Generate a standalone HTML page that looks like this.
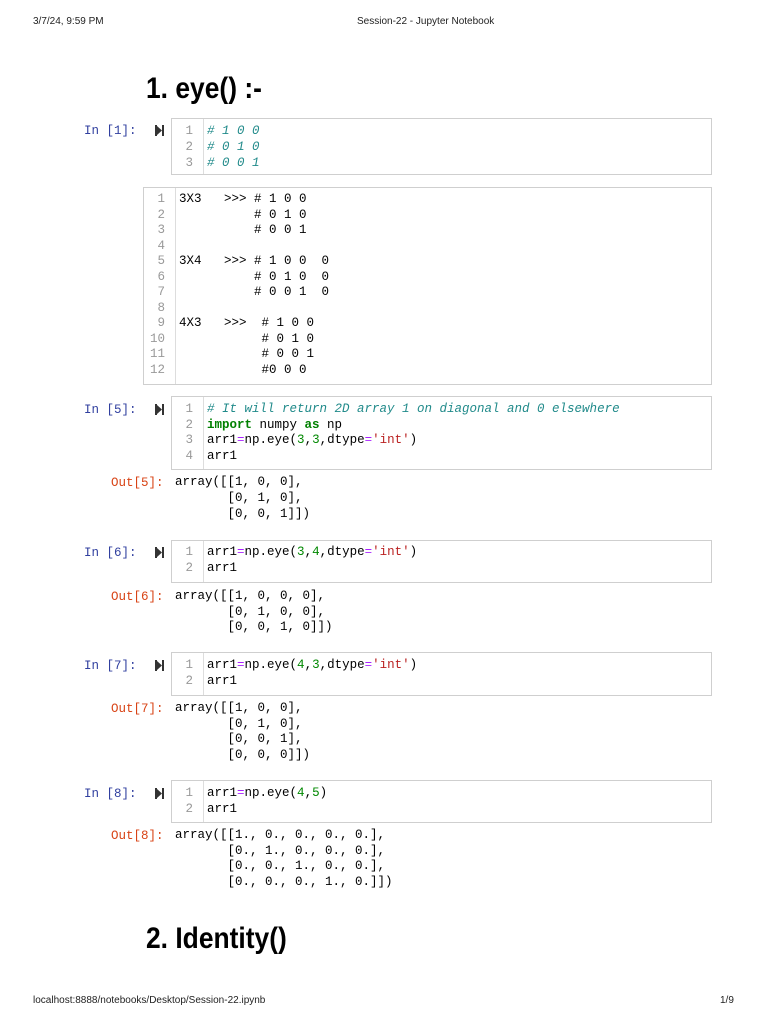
<!DOCTYPE html>
<html><head><meta charset="utf-8"><style>
body{margin:0;width:768px;height:1024px;background:#fff;position:relative;overflow:hidden;font-family:"Liberation Sans",sans-serif}
.a{position:absolute;white-space:pre}
.m{font-family:"Liberation Mono",monospace;font-size:12.5px;line-height:16px;color:#000}
.box{position:absolute;border:1px solid #cfcfcf;background:#fff;box-sizing:border-box}
.gut{position:absolute;top:0;bottom:0;border-right:1px solid #ddd}
.n{color:#999;text-align:right;width:20px}
.in{color:#303F9F}.out{color:#D84315}
.c{color:#208a8a;font-style:italic}
.k{color:#008000;font-weight:bold}.g{color:#080}.s{color:#BA2121}.o{color:#AA22FF}
.h{font-weight:bold;font-size:30px;line-height:30px;color:#000;transform:scaleX(0.88);transform-origin:0 0}
.run{position:absolute;width:9px;height:11px}
</style></head><body>
<div class="a" style="left:33px;top:16px;font-size:10px;color:#222">3/7/24, 9:59 PM</div>
<div class="a" style="left:357px;top:16px;font-size:10px;color:#222">Session-22 - Jupyter Notebook</div>
<div class="a h" style="left:146px;top:74px">1. eye() :-</div>

<!-- In 1 -->
<div class="a m in" style="left:84px;top:123px">In [1]:</div>
<svg class="run" style="left:155px;top:125px" viewBox="0 0 9 11"><path d="M0 0h2v11H0zM2 1l5 4.5L2 10z" fill="#333"/><rect x="7" y="0" width="2" height="11" fill="#333"/></svg>
<div class="box" style="left:171px;top:118px;width:541px;height:57px"><div class="gut" style="left:0;width:31px"></div></div>
<div class="a m n" style="left:173px;top:123px">1
2
3</div>
<div class="a m c" style="left:207px;top:123px"># 1 0 0
# 0 1 0
# 0 0 1</div>

<!-- raw -->
<div class="box" style="left:143px;top:187px;width:569px;height:198px"><div class="gut" style="left:0;width:31px"></div></div>
<div class="a m n" style="left:145px;top:192px;line-height:15.55px">1
2
3
4
5
6
7
8
9
10
11
12</div>
<div class="a m" style="left:179px;top:192px;line-height:15.55px">3X3   >>> # 1 0 0
          # 0 1 0
          # 0 0 1

3X4   >>> # 1 0 0  0
          # 0 1 0  0
          # 0 0 1  0

4X3   >>>  # 1 0 0
           # 0 1 0
           # 0 0 1
           #0 0 0</div>

<!-- In 5 -->
<div class="a m in" style="left:84px;top:402px">In [5]:</div>
<svg class="run" style="left:155px;top:404px" viewBox="0 0 9 11"><path d="M0 0h2v11H0zM2 1l5 4.5L2 10z" fill="#333"/><rect x="7" y="0" width="2" height="11" fill="#333"/></svg>
<div class="box" style="left:171px;top:396px;width:541px;height:74px"><div class="gut" style="left:0;width:31px"></div></div>
<div class="a m n" style="left:173px;top:402px;line-height:15.5px">1
2
3
4</div>
<div class="a m" style="left:207px;top:402px;line-height:15.5px"><span class="c"># It will return 2D array 1 on diagonal and 0 elsewhere</span>
<span class="k">import</span> numpy <span class="k">as</span> np
arr1<span class="o">=</span>np.eye(<span class="g">3</span>,<span class="g">3</span>,dtype<span class="o">=</span><span class="s">'int'</span>)
arr1</div>
<div class="a m out" style="left:111px;top:475px">Out[5]:</div>
<div class="a m" style="left:175px;top:475px;line-height:15.8px">array([[1, 0, 0],
       [0, 1, 0],
       [0, 0, 1]])</div>

<!-- In 6 -->
<div class="a m in" style="left:84px;top:545px">In [6]:</div>
<svg class="run" style="left:155px;top:547px" viewBox="0 0 9 11"><path d="M0 0h2v11H0zM2 1l5 4.5L2 10z" fill="#333"/><rect x="7" y="0" width="2" height="11" fill="#333"/></svg>
<div class="box" style="left:171px;top:540px;width:541px;height:43px"><div class="gut" style="left:0;width:31px"></div></div>
<div class="a m n" style="left:173px;top:545px;line-height:15.5px">1
2</div>
<div class="a m" style="left:207px;top:545px;line-height:15.5px">arr1<span class="o">=</span>np.eye(<span class="g">3</span>,<span class="g">4</span>,dtype<span class="o">=</span><span class="s">'int'</span>)
arr1</div>
<div class="a m out" style="left:111px;top:589px">Out[6]:</div>
<div class="a m" style="left:175px;top:589px;line-height:15.6px">array([[1, 0, 0, 0],
       [0, 1, 0, 0],
       [0, 0, 1, 0]])</div>

<!-- In 7 -->
<div class="a m in" style="left:84px;top:658px">In [7]:</div>
<svg class="run" style="left:155px;top:660px" viewBox="0 0 9 11"><path d="M0 0h2v11H0zM2 1l5 4.5L2 10z" fill="#333"/><rect x="7" y="0" width="2" height="11" fill="#333"/></svg>
<div class="box" style="left:171px;top:652px;width:541px;height:44px"><div class="gut" style="left:0;width:31px"></div></div>
<div class="a m n" style="left:173px;top:658px;line-height:15.5px">1
2</div>
<div class="a m" style="left:207px;top:658px;line-height:15.5px">arr1<span class="o">=</span>np.eye(<span class="g">4</span>,<span class="g">3</span>,dtype<span class="o">=</span><span class="s">'int'</span>)
arr1</div>
<div class="a m out" style="left:111px;top:701px">Out[7]:</div>
<div class="a m" style="left:175px;top:701px;line-height:15.6px">array([[1, 0, 0],
       [0, 1, 0],
       [0, 0, 1],
       [0, 0, 0]])</div>

<!-- In 8 -->
<div class="a m in" style="left:84px;top:786px">In [8]:</div>
<svg class="run" style="left:155px;top:788px" viewBox="0 0 9 11"><path d="M0 0h2v11H0zM2 1l5 4.5L2 10z" fill="#333"/><rect x="7" y="0" width="2" height="11" fill="#333"/></svg>
<div class="box" style="left:171px;top:780px;width:541px;height:43px"><div class="gut" style="left:0;width:31px"></div></div>
<div class="a m n" style="left:173px;top:786px;line-height:15.5px">1
2</div>
<div class="a m" style="left:207px;top:786px;line-height:15.5px">arr1<span class="o">=</span>np.eye(<span class="g">4</span>,<span class="g">5</span>)
arr1</div>
<div class="a m out" style="left:111px;top:828px">Out[8]:</div>
<div class="a m" style="left:175px;top:828px;line-height:15.7px">array([[1., 0., 0., 0., 0.],
       [0., 1., 0., 0., 0.],
       [0., 0., 1., 0., 0.],
       [0., 0., 0., 1., 0.]])</div>

<div class="a h" style="left:146px;top:924px">2. Identity()</div>
<div class="a" style="left:33px;top:995px;font-size:10px;color:#222">localhost:8888/notebooks/Desktop/Session-22.ipynb</div>
<div class="a" style="left:720px;top:995px;font-size:10px;color:#222">1/9</div>
</body></html>
